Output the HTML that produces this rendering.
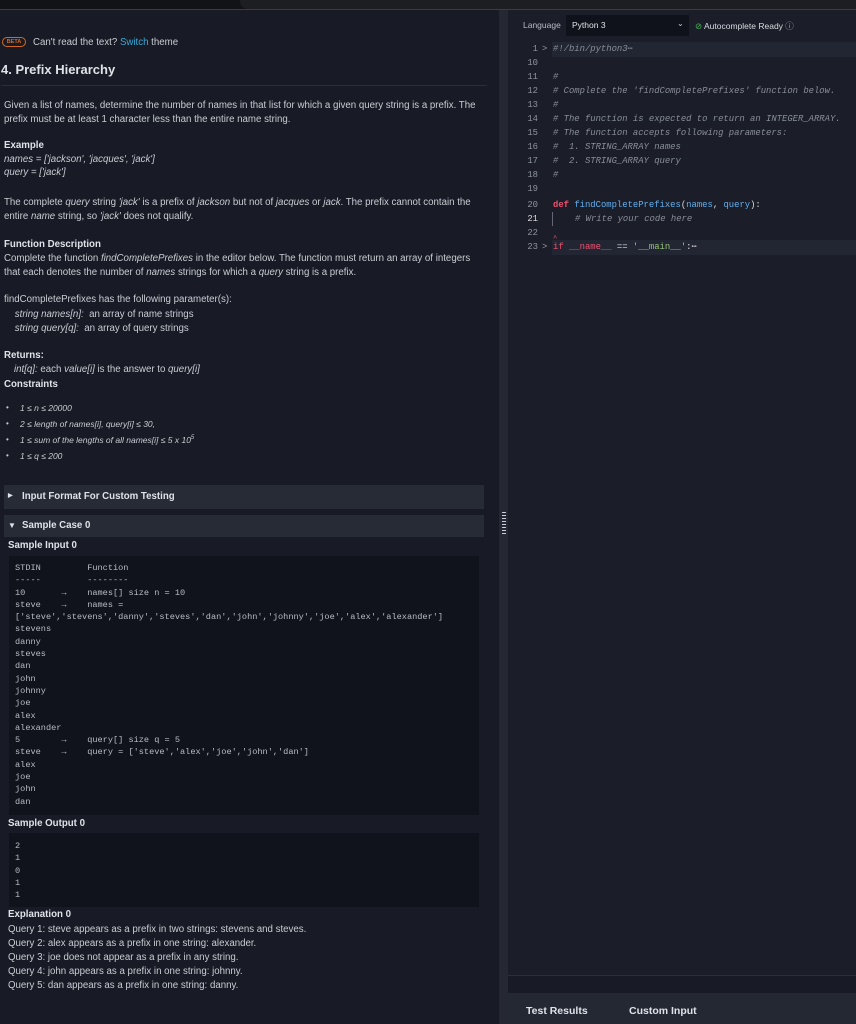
<!DOCTYPE html>
<html><head><meta charset="utf-8"><style>
*{margin:0;padding:0;box-sizing:border-box}
body{width:856px;height:1024px;background:#181b25;color:#c9ccd3;font-family:"Liberation Sans",sans-serif;font-size:9.7px;position:relative;overflow:hidden}
.a{position:absolute;white-space:nowrap}
.b{font-weight:bold;color:#dfe2e8}
i{font-style:italic}
pre.a{white-space:pre}
.m{font-family:"Liberation Mono",monospace;font-size:8.6px;color:#b9bcc4}
.code .a{font-family:"Liberation Mono",monospace;font-size:8.9px}
.c{color:#8a8e98;font-style:italic}
.ln{color:#8f939c;width:30px;text-align:right;left:508px}
</style></head><body>
<div class="a" style="left:0;top:0;width:856px;height:10px;background:#121316"></div>
<div class="a" style="left:240px;top:0;width:616px;height:9px;background:#1d1e22;border-radius:0 0 0 8px"></div>
<div class="a" style="left:0;top:9px;width:856px;height:1px;background:#3a3d44"></div>

<div class="a" style="left:2px;top:37px;width:24px;height:10px;border:1px solid #d4691e;border-radius:5px;color:#d4691e;font-size:5.5px;font-weight:bold;text-align:center;line-height:8px">BETA</div>
<div class="a" style="left:33px;top:37px">Can't read the text? <span style="color:#3aa8d8">Switch</span> theme</div>
<div class="a b" style="left:1px;top:62px;font-size:13px">4. Prefix Hierarchy</div>
<div class="a" style="left:1px;top:85px;width:486px;height:1px;background:#2a2e38"></div>
<div class="a" style="left:4px;top:99px;line-height:13.5px">Given a list of names, determine the number of names in that list for which a given query string is a prefix. The<br>prefix must be at least 1 character less than the entire name string.</div>
<div class="a" style="left:4px;top:139px;line-height:13.5px"><span class="b">Example</span><br><i>names = ['jackson', 'jacques', 'jack']</i><br><i>query = ['jack']</i></div>
<div class="a" style="left:4px;top:196px;line-height:13.5px">The complete <i>query</i> string <i>'jack'</i> is a prefix of <i>jackson</i> but not of <i>jacques</i> or <i>jack</i>. The prefix cannot contain the<br>entire <i>name</i> string, so <i>'jack'</i> does not qualify.</div>
<div class="a" style="left:4px;top:238px;line-height:13.8px"><span class="b">Function Description</span><br>Complete the function <i>findCompletePrefixes</i> in the editor below. The function must return an array of integers<br>that each denotes the number of <i>names</i> strings for which a <i>query</i> string is a prefix.</div>
<div class="a" style="left:4px;top:293px;line-height:14.5px">findCompletePrefixes has the following parameter(s):<br>&nbsp;&nbsp;&nbsp;&nbsp;<i>string names[n]:</i>&nbsp; an array of name strings<br>&nbsp;&nbsp;&nbsp;&nbsp;<i>string query[q]:</i>&nbsp; an array of query strings</div>
<div class="a b" style="left:4px;top:350px">Returns:</div>
<div class="a" style="left:14px;top:364px"><i>int[q]:</i> each <i>value[i]</i> is the answer to <i>query[i]</i></div>
<div class="a b" style="left:4px;top:379px">Constraints</div>
<div class="a" style="left:6px;top:400px;line-height:16px;font-size:8px">•<br>•<br>•<br>•</div>
<div class="a" style="left:20px;top:400px;line-height:16px;font-size:8.5px;font-style:italic">1 ≤ n ≤ 20000<br>2 ≤ length of names[i], query[i] ≤ 30,<br>1 ≤ sum of the lengths of all names[i] ≤ 5 x 10<sup style="font-size:6px;line-height:0">5</sup><br>1 ≤ q ≤ 200</div>

<div class="a" style="left:4px;top:485px;width:480px;height:24px;background:#272b36"></div>
<div class="a b" style="left:8px;top:492px;font-size:6px">▶</div>
<div class="a b" style="left:22px;top:491px">Input Format For Custom Testing</div>
<div class="a" style="left:4px;top:515px;width:480px;height:22px;background:#272b36"></div>
<div class="a b" style="left:8px;top:521px;font-size:8px">▼</div>
<div class="a b" style="left:22px;top:520px">Sample Case 0</div>
<div class="a b" style="left:8px;top:540px">Sample Input 0</div>
<div class="a" style="left:9px;top:556px;width:470px;height:259px;background:#10131c"></div>
<pre class="a m" style="left:15px;top:562px;line-height:12.3px">STDIN         Function
-----         --------
10       →    names[] size n = 10
steve    →    names =
['steve','stevens','danny','steves','dan','john','johnny','joe','alex','alexander']
stevens
danny
steves
dan
john
johnny
joe
alex
alexander
5        →    query[] size q = 5
steve    →    query = ['steve','alex','joe','john','dan']
alex
joe
john
dan</pre>
<div class="a b" style="left:8px;top:818px">Sample Output 0</div>
<div class="a" style="left:9px;top:833px;width:470px;height:74px;background:#10131c"></div>
<pre class="a m" style="left:15px;top:840px;line-height:12.3px">2
1
0
1
1</pre>
<div class="a b" style="left:8px;top:909px">Explanation 0</div>
<div class="a" style="left:8px;top:923px;line-height:14px">Query 1: steve appears as a prefix in two strings: stevens and steves.<br>Query 2: alex appears as a prefix in one string: alexander.<br>Query 3: joe does not appear as a prefix in any string.<br>Query 4: john appears as a prefix in one string: johnny.<br>Query 5: dan appears as a prefix in one string: danny.</div>

<!-- divider -->
<div class="a" style="left:499px;top:10px;width:9px;height:1014px;background:#252833"></div>
<div class="a" style="left:502px;top:512px;width:4px;height:22px;background:repeating-linear-gradient(#ccd 0 1px,transparent 1px 3px)"></div>

<!-- editor -->
<div class="a" style="left:508px;top:10px;width:348px;height:965px;background:#1b1e29"></div>
<div class="a" style="left:523px;top:20px;font-size:8.5px;color:#b8bbc3">Language</div>
<div class="a" style="left:566px;top:15px;width:123px;height:21px;background:#0f121a"></div>
<div class="a" style="left:572px;top:20px;font-size:8.5px;color:#e0e2e6">Python 3</div>
<div class="a" style="left:677px;top:19px;font-size:8px;color:#ccc">⌄</div>
<div class="a" style="left:695px;top:20px;font-size:8.5px;color:#d8dade"><span style="color:#3fb950">⊘</span> Autocomplete Ready <span style="color:#aaa">ⓘ</span></div>
<div class="a" style="left:552px;top:42px;width:304px;height:15px;background:#222633"></div>
<div class="a" style="left:552px;top:240px;width:304px;height:15px;background:#222633"></div>
<div class="a" style="left:552px;top:212px;width:1px;height:14px;background:#667"></div>
<div class="code">
<div class="a ln" style="top:44px">1</div><div class="a" style="left:542px;top:44px;color:#999">&gt;</div><div class="a c" style="left:553px;top:44px">#!/bin/python3⋯</div>
<div class="a ln" style="top:58px">10</div>
<div class="a ln" style="top:72px">11</div><div class="a c" style="left:553px;top:72px">#</div>
<div class="a ln" style="top:86px">12</div><div class="a c" style="left:553px;top:86px"># Complete the 'findCompletePrefixes' function below.</div>
<div class="a ln" style="top:100px">13</div><div class="a c" style="left:553px;top:100px">#</div>
<div class="a ln" style="top:114px">14</div><div class="a c" style="left:553px;top:114px"># The function is expected to return an INTEGER_ARRAY.</div>
<div class="a ln" style="top:128px">15</div><div class="a c" style="left:553px;top:128px"># The function accepts following parameters:</div>
<div class="a ln" style="top:142px">16</div><div class="a c" style="left:553px;top:142px">#&nbsp; 1. STRING_ARRAY names</div>
<div class="a ln" style="top:156px">17</div><div class="a c" style="left:553px;top:156px">#&nbsp; 2. STRING_ARRAY query</div>
<div class="a ln" style="top:170px">18</div><div class="a c" style="left:553px;top:170px">#</div>
<div class="a ln" style="top:184px">19</div>
<div class="a ln" style="top:200px">20</div><div class="a" style="left:553px;top:200px"><span style="color:#f0506e;font-weight:bold">def</span> <span style="color:#61afef">findCompletePrefixes</span><span style="color:#ddd">(</span><span style="color:#61afef">names</span><span style="color:#ddd">, </span><span style="color:#61afef">query</span><span style="color:#ddd">):</span></div>
<div class="a ln" style="top:214px;color:#ddd">21</div><div class="a c" style="left:575px;top:214px"># Write your code here</div>
<div class="a ln" style="top:228px">22</div>
<div class="a" style="left:553px;top:235px;color:#f0506e;font-size:7px">^</div>
<div class="a ln" style="top:242px">23</div><div class="a" style="left:542px;top:242px;color:#999">&gt;</div><div class="a" style="left:553px;top:242px"><span style="color:#f0506e">if __name__</span> <span style="color:#ddd">==</span> <span style="color:#98c379">'__main__'</span><span style="color:#ddd">:⋯</span></div>
</div>
<div class="a" style="left:508px;top:975px;width:348px;height:1px;background:#2b2f3a"></div>
<div class="a" style="left:508px;top:993px;width:348px;height:31px;background:#242833"></div>
<div class="a b" style="left:526px;top:1005px;font-size:10.5px">Test Results</div>
<div class="a b" style="left:629px;top:1005px;font-size:10.5px">Custom Input</div>
</body></html>
